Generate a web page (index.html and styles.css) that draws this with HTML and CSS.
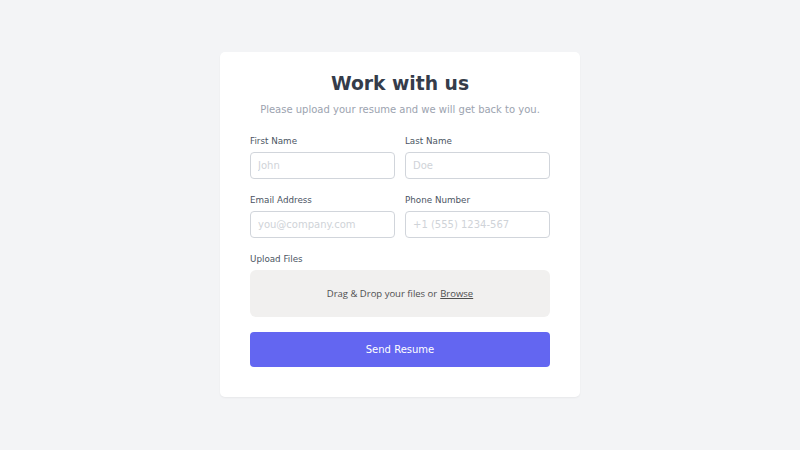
FILE: index.html
```html
<!DOCTYPE html>
<html>
<head>
<meta charset="utf-8">
<link rel="stylesheet" href="styles.css">
</head>
<body>
<div class="page">
  <form class="card">
    <h1 class="title">Work with us</h1>
    <p class="subtitle">Please upload your resume and we will get back to you.</p>
    <div class="row">
      <div class="field">
        <label class="label">First Name</label>
        <input class="input" placeholder="John">
      </div>
      <div class="field">
        <label class="label">Last Name</label>
        <input class="input" placeholder="Doe">
      </div>
    </div>
    <div class="row">
      <div class="field">
        <label class="label">Email Address</label>
        <input class="input" placeholder="you@company.com">
      </div>
      <div class="field">
        <label class="label">Phone Number</label>
        <input class="input" placeholder="+1 (555) 1234-567">
      </div>
    </div>
    <div class="field upload">
      <label class="label">Upload Files</label>
      <div class="drop">Drag &amp; Drop your files or <span class="browse">Browse</span></div>
    </div>
    <button type="button" class="btn">Send Resume</button>
  </form>
</div>
</body>
</html>
```
FILE: styles.css
```css
* { box-sizing: border-box; }
html, body { margin: 0; padding: 0; }
body {
  background: #f3f4f6;
  font-family: "DejaVu Sans", sans-serif;
  width: 800px;
  height: 450px;
}
.page {
  display: flex;
  justify-content: center;
  padding-top: 52px;
}
.card {
  width: 360px;
  background: #fff;
  border-radius: 5px;
  box-shadow: 0 1px 2px rgba(0,0,0,0.05);
  padding: 21px 30px 30px;
  display: flex;
  flex-direction: column;
}
.title {
  margin: 0;
  text-align: center;
  font-size: 18.75px;
  line-height: 22px;
  font-weight: bold;
  color: #353c4a;
}
.subtitle {
  margin: 6px 0 0;
  text-align: center;
  font-size: 10px;
  line-height: 17px;
  color: #9ca3af;
  white-space: nowrap;
}
.row {
  display: grid;
  grid-template-columns: 1fr 1fr;
  gap: 10px;
  margin-top: 17px;
}
.row + .row { margin-top: 15px; }
.upload { margin-top: 15px; }
.field { display: flex; flex-direction: column; }
.label {
  font-size: 8.75px;
  line-height: 12px;
  color: #4b5563;
  margin-bottom: 5px;
}
.input {
  height: 27px;
  border: 1px solid #d1d5db;
  border-radius: 4px;
  padding: 0 7px;
  font-family: "DejaVu Sans", sans-serif;
  font-size: 10px;
  color: #374151;
  outline: none;
  width: 100%;
}
.input::placeholder { color: #cfd3d8; }
.drop {
  height: 47px;
  background: #f1f0ef;
  border-radius: 6px;
  display: flex;
  align-items: center;
  justify-content: center;
  font-family: "Open Sans", sans-serif;
  font-size: 9.5px;
  color: #4f4f4f;
}
.browse { text-decoration: underline; margin-left: 3px; }
.btn {
  margin-top: 15px;
  height: 35px;
  border: none;
  border-radius: 4px;
  background: #6366f1;
  color: #fff;
  font-family: "DejaVu Sans", sans-serif;
  font-size: 10px;
}
```
